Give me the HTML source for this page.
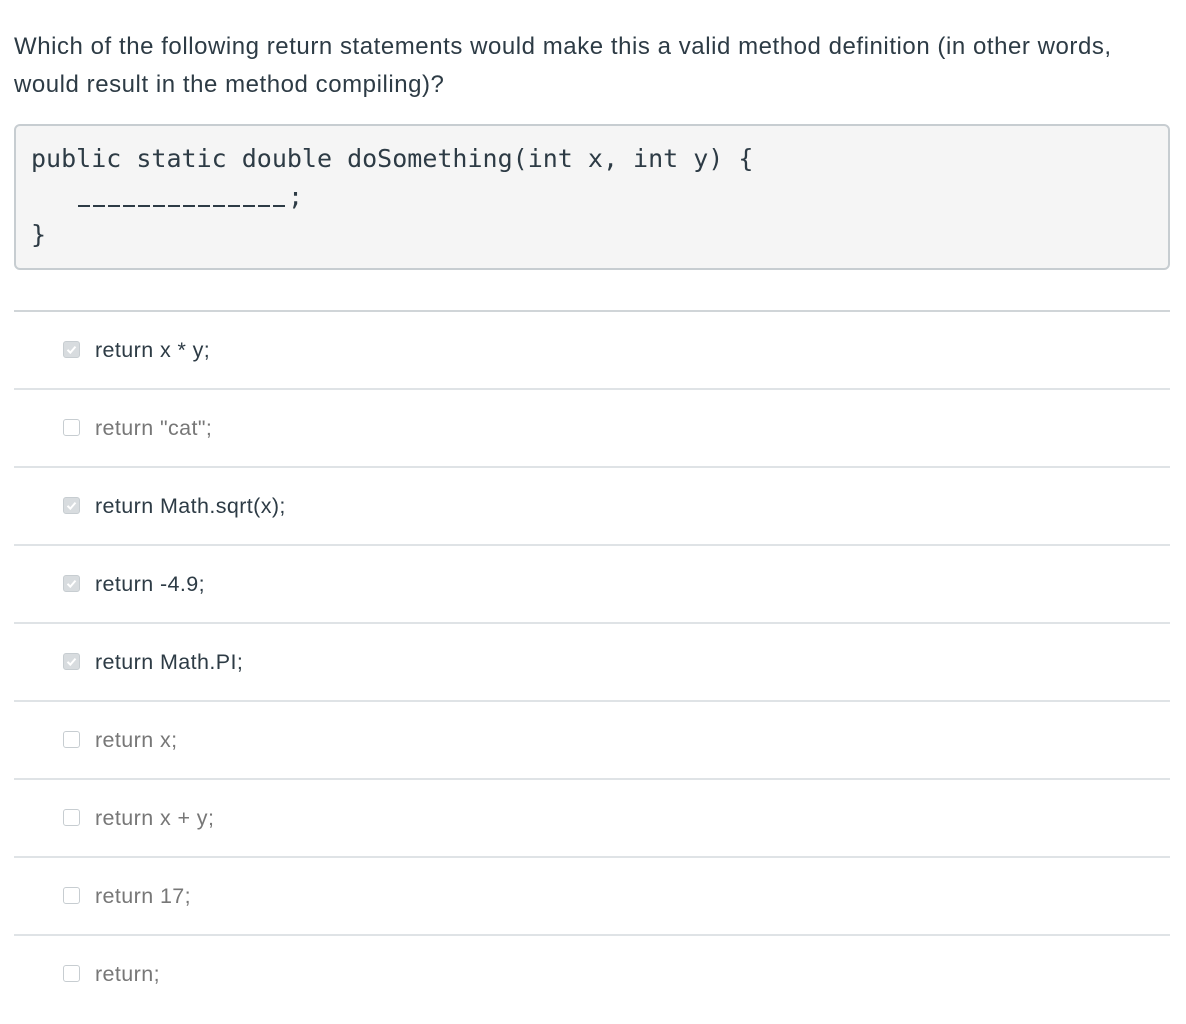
<!DOCTYPE html>
<html><head><style>
body{margin:0;background:#fff;font-family:"Liberation Sans",sans-serif;color:#2d3b45;}
.q{position:absolute;left:14px;top:28px;width:1170px;font-size:24px;line-height:38px;letter-spacing:0.55px;white-space:nowrap;}
.code{position:absolute;left:14px;top:124px;width:1152px;height:142px;background:#f5f5f5;border:2px solid #c7cdd1;border-radius:6px;box-sizing:content-box;}
.code pre{margin:0;position:absolute;left:15px;top:14px;font-family:"DejaVu Sans Mono","Liberation Mono",monospace;font-size:25px;line-height:38px;color:#2d3b45;}
.dash{position:absolute;left:62px;top:79px;width:210px;height:2px;background:repeating-linear-gradient(90deg,#2d3b45 0 12px,transparent 12px 15px);}
.semi{position:absolute;left:272px;top:52px;font-family:"DejaVu Sans Mono",monospace;font-size:25px;line-height:38px;}
.opts{position:absolute;left:14px;top:310px;width:1156px;}
.row{height:76px;border-top:2px solid #dfe3e6;position:relative;}
.row:first-child{border-top:2px solid #d0d5d8;}
.cb{position:absolute;left:49px;top:29px;width:17px;height:17px;border:1px solid #c7cdd1;border-radius:3px;background:#fff;box-sizing:border-box;}
.cb.on{background:#d8dcdf;border-color:#c7cdd1;}
.cb.on svg{position:absolute;left:1px;top:1px;}
.t{position:absolute;left:81px;top:25px;font-size:21.5px;line-height:26px;letter-spacing:0.4px;}
.off .t{color:#777;}
</style></head><body>
<div class="q">Which of the following return statements would make this a valid method definition (in other words,<br>would result in the method compiling)?</div>
<div class="code"><pre>public static double doSomething(int x, int y) {

}</pre><div class="dash"></div><div class="semi">;</div></div>
<div class="opts">
<div class="row"><div class="cb on"><svg width="13" height="13" viewBox="0 0 13 13"><path d="M2.5 6.8l2.8 2.8 5.2-6" fill="none" stroke="#fff" stroke-width="2"/></svg></div><div class="t">return x * y;</div></div>
<div class="row off"><div class="cb"></div><div class="t">return "cat";</div></div>
<div class="row"><div class="cb on"><svg width="13" height="13" viewBox="0 0 13 13"><path d="M2.5 6.8l2.8 2.8 5.2-6" fill="none" stroke="#fff" stroke-width="2"/></svg></div><div class="t">return Math.sqrt(x);</div></div>
<div class="row"><div class="cb on"><svg width="13" height="13" viewBox="0 0 13 13"><path d="M2.5 6.8l2.8 2.8 5.2-6" fill="none" stroke="#fff" stroke-width="2"/></svg></div><div class="t">return -4.9;</div></div>
<div class="row"><div class="cb on"><svg width="13" height="13" viewBox="0 0 13 13"><path d="M2.5 6.8l2.8 2.8 5.2-6" fill="none" stroke="#fff" stroke-width="2"/></svg></div><div class="t">return Math.PI;</div></div>
<div class="row off"><div class="cb"></div><div class="t">return x;</div></div>
<div class="row off"><div class="cb"></div><div class="t">return x + y;</div></div>
<div class="row off"><div class="cb"></div><div class="t">return 17;</div></div>
<div class="row off"><div class="cb"></div><div class="t">return;</div></div>
</div>
</body></html>
